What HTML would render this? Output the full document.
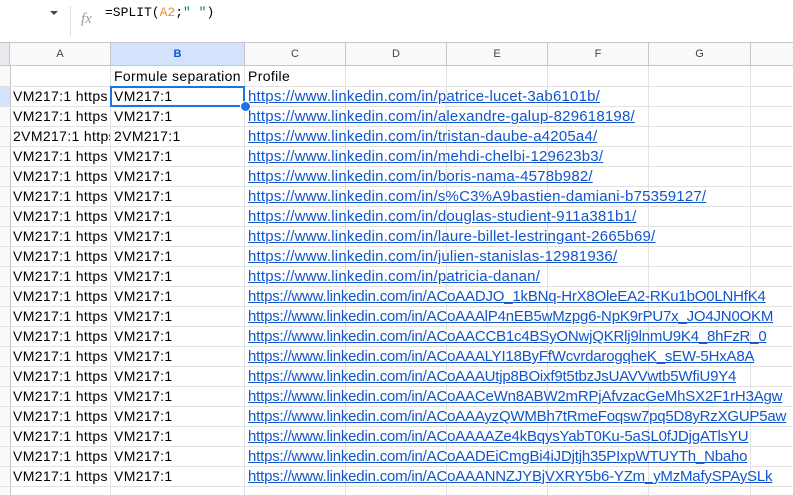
<!DOCTYPE html><html><head><style>
body{margin:0;width:793px;height:495px;overflow:hidden;background:#fff;font-family:"Liberation Sans",Arial,sans-serif;position:relative}
.a{position:absolute}
.h{position:absolute;top:43px;height:23px;border-right:1px solid #c7c7c7;border-bottom:1px solid #c7c7c7;background:#f8f9fa;font-size:11px;color:#444;text-align:center;line-height:23px;box-sizing:border-box}
.v{position:absolute;top:66px;height:429px;width:1px;background:#e2e2e2}
.r{position:absolute;left:0;width:793px;height:1px;background:#e2e2e2}
.t{position:absolute;font-size:14px;letter-spacing:0.35px;color:#000;white-space:nowrap;line-height:21px;overflow:hidden}
.l{font-size:15px;letter-spacing:0.2px;color:#1155cc;text-decoration:underline;overflow:visible}
.l.k{letter-spacing:-0.2px}
</style></head><body>
<div class="a" style="left:0;top:0;width:793px;height:42px;background:#fff;border-bottom:1px solid #c7c7c7"></div>
<div class="a" style="left:50px;top:11px;width:0;height:0;border-left:4px solid transparent;border-right:4px solid transparent;border-top:4px solid #444"></div>
<div class="a" style="left:70px;top:6px;width:1px;height:30px;background:#ddd"></div>
<div class="a" style="left:81px;top:11px;font-family:'Liberation Serif',serif;font-style:italic;font-size:15px;color:#999">fx</div>
<div class="a" style="left:105px;top:5px;font-family:'Liberation Mono',monospace;font-size:13px;color:#000">=SPLIT(<span style="color:#e8912d">A2</span>;<span style="color:#188038">" "</span>)</div>
<div class="h" style="left:0;width:10px;background:#e8eaed"></div>
<div class="h" style="left:10px;width:101px">A</div>
<div class="h" style="left:111px;width:134px;background:#d3e3fd;font-weight:bold;color:#0b57d0">B</div>
<div class="h" style="left:245px;width:101px">C</div>
<div class="h" style="left:346px;width:101px">D</div>
<div class="h" style="left:447px;width:101px">E</div>
<div class="h" style="left:548px;width:101px">F</div>
<div class="h" style="left:649px;width:102px">G</div>
<div class="h" style="left:751px;width:50px"></div>
<div class="a" style="left:0;top:66px;width:10px;height:429px;background:#f8f9fa;border-right:1px solid #c7c7c7"></div>
<div class="a" style="left:0;top:86px;width:10px;height:20px;background:#d3e3fd"></div>
<div class="v" style="left:110px"></div><div class="v" style="left:244px"></div><div class="v" style="left:345px"></div><div class="v" style="left:446px"></div><div class="v" style="left:547px"></div><div class="v" style="left:648px"></div><div class="v" style="left:750px"></div>
<div id="rows"></div>
<script>
var L=["patrice-lucet-3ab6101b/","alexandre-galup-829618198/","tristan-daube-a4205a4/","mehdi-chelbi-129623b3/","boris-nama-4578b982/","s%C3%A9bastien-damiani-b75359127/","douglas-studient-911a381b1/","laure-billet-lestringant-2665b69/","julien-stanislas-12981936/","patricia-danan/","ACoAADJO_1kBNq-HrX8OleEA2-RKu1bO0LNHfK4","ACoAAAlP4nEB5wMzpg6-NpK9rPU7x_JO4JN0OKM","ACoAACCB1c4BSyONwjQKRlj9lnmU9K4_8hFzR_0","ACoAAALYI18ByFfWcvrdarogqheK_sEW-5HxA8A","ACoAAAUtjp8BOixf9t5tbzJsUAVVwtb5WfiU9Y4","ACoAACeWn8ABW2mRPjAfvzacGeMhSX2F1rH3Agw","ACoAAAyzQWMBh7tRmeFoqsw7pq5D8yRzXGUP5aw","ACoAAAAZe4kBqysYabT0Ku-5aSL0fJDjgATlsYU","ACoAADEiCmgBi4iJDjtjh35PIxpWTUYTh_Nbaho","ACoAAANNZJYBjVXRY5b6-YZm_yMzMafySPAySLk"];
var h='';
for(var i=0;i<=20;i++){h+='<div class="r" style="top:'+(86+i*20)+'px"></div>';}
h+='<div class="t" style="left:114px;top:66px">Formule separation</div><div class="t" style="left:248px;top:66px">Profile</div>';
for(var i=0;i<20;i++){var y=86+i*20;
h+='<div class="t" style="left:13px;top:'+y+'px;width:97px">'+(i==2?'2VM217:1 https':'VM217:1 https')+'</div>';
h+='<div class="t" style="left:114px;top:'+y+'px">'+(i==2?'2VM217:1':'VM217:1')+'</div>';
h+='<div class="t l'+(i>=10?' k':'')+'" style="left:248px;top:'+y+'px">https://www.linkedin.com/in/'+L[i]+'</div>';}
h+='<div class="a" style="left:110px;top:86px;width:131px;height:17px;border:2px solid #1a73e8"></div><div class="a" style="left:240px;top:101px;width:9px;height:9px;border-radius:50%;background:#1a73e8;border:1px solid #fff"></div>';
document.getElementById('rows').innerHTML=h;
</script>
</body></html>
